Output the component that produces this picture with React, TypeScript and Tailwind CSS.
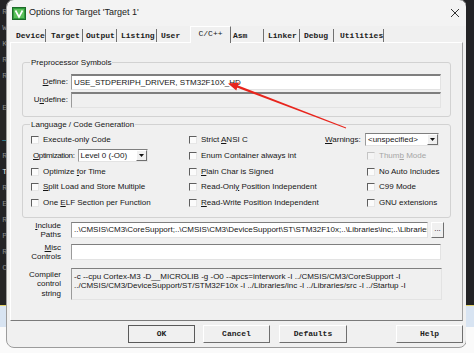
import React from 'react';

const sans = "font-['Liberation_Sans',Arial,sans-serif]";
const mono = "font-['Liberation_Mono',monospace]";

const sunken =
  'border-t border-l border-b border-r border-t-[#7f7f7f] border-l-[#9a9a9a] border-b-[#e3e3e3] border-r-[#e3e3e3]';
const raised =
  'border-t border-l border-b border-r border-t-white border-l-white border-b-[#6f6f6f] border-r-[#6f6f6f]';

const tabs = [
  { name: 'Device', cls: 'w-[36px] pl-[6px] border-r' },
  { name: 'Target', cls: 'w-[37px] pl-[5px] border-r' },
  { name: 'Output', cls: 'w-[34px] pl-[3px] border-r' },
  { name: 'Listing', cls: 'w-[40px] pl-[4px] border-r' },
  { name: 'User', cls: 'w-[33px] pl-[4px]' },
  { name: 'C/C++', cls: '', selected: true },
  { name: 'Asm', cls: 'w-[33px] pl-[2px] border-r' },
  { name: 'Linker', cls: 'w-[36px] pl-[4px] border-r' },
  { name: 'Debug', cls: 'w-[34px] pl-[4px] border-r' },
  { name: 'Utilities', cls: 'w-[50px] pl-[6px] border-r' },
];

const Check = ({ children, disabled }: { children: React.ReactNode; disabled?: boolean }) => (
  <div className={`flex items-center gap-[4px] whitespace-nowrap ${disabled ? 'text-[#a6a6a6]' : ''}`}>
    <span
      className={`w-[8px] h-[8px] shrink-0 border-t border-l border-b border-r ${
        disabled
          ? 'border-t-[#c4c4c4] border-l-[#c4c4c4] border-b-[#ececec] border-r-[#ececec] bg-[#f4f4f4]'
          : 'border-t-[#5f5f5f] border-l-[#5f5f5f] border-b-[#e6e6e6] border-r-[#e6e6e6] bg-[#fbfbfb]'
      }`}
    />
    <span>{children}</span>
  </div>
);

const Select = ({ value, className }: { value: string; className: string }) => (
  <div className={`flex items-stretch bg-white ${sunken} ${className}`}>
    <span className="flex-1 pl-[2px] flex items-center whitespace-nowrap overflow-hidden">{value}</span>
    <span className={`w-[11px] flex items-center justify-center bg-[#f0f0f0] ${raised}`}>
      <svg width="5" height="3" viewBox="0 0 5 3">
        <path d="M0 0h5L2.5 3z" fill="#111" />
      </svg>
    </span>
  </div>
);

const Group = ({ title, className, children }: { title: string; className: string; children: React.ReactNode }) => (
  <div className={`relative mx-[11px] border border-[#d2d2d2] rounded-[3px] ${className}`}>
    <span className="absolute -top-[6px] left-[7px] px-[1px] bg-[#f0f0f0] leading-[11px]">{title}</span>
    {children}
  </div>
);

const Btn = ({ label, def, className }: { label: string; def?: boolean; className: string }) => (
  <div
    className={`h-[18px] flex items-center justify-center bg-[#f0f0f0] ${mono} font-bold text-[8px] text-[#222] ${
      def ? 'border border-[#5a5a5a]' : raised
    } ${className}`}
  >
    {label}
  </div>
);

const Strip = ({ side }: { side: 'l' | 'r' }) => {
  const bits = side === 'l' ? ['R', 'W', 'K', 'R', 'R', '', 'E', '', '—', 'R', 'T', 'R', 'E', 'R', 'P', 'R', 'C', ''] : [];
  return (
    <div className={`flex flex-col h-full ${side === 'l' ? 'w-[7px]' : 'w-[8px]'}`}>
      <div className="h-[305px] bg-[#232325] flex flex-col overflow-hidden pt-[4px]">
        {bits.map((b, i) => (
          <div
            key={i}
            className={`h-[16px] flex items-center justify-end ${mono} text-[8px] leading-none ${
              b === '—' ? 'text-[#3fc6d6]' : b === 'T' ? 'text-[#e8e8e8]' : 'text-[#8a8a8a]'
            }`}
          >
            {b}
          </div>
        ))}
      </div>
      <div className="h-px bg-[#e4d36a]" />
      <div className="h-[21px] bg-[#d8e4f2]" />
      <div className="flex-1 bg-[#fafafa]" />
    </div>
  );
};

export default function App() {
  return (
    <div className={`relative w-[474px] h-[353px] overflow-hidden flex ${sans} text-[8px] text-[#151515]`}>
      <Strip side="l" />
      <div className="w-[459px] h-full flex flex-col bg-[linear-gradient(#232325_0_305px,#e4d36a_305px_306px,#d8e4f2_306px_327px,#fafafa_327px)]">
        <div className="h-[347px] bg-[#f0f0f0] rounded-[7px] overflow-hidden flex flex-col outline-1 outline-[#9c9c9c]">
          {/* title bar */}
          <div className="h-[26px] shrink-0 flex items-center pl-[5px] pr-[6px] bg-[#f3f3f3]">
            <svg width="14" height="13" viewBox="0 0 14 13">
              <rect x="0.5" y="0.5" width="13" height="12" fill="#2f9a3c" stroke="#1d6b27" />
              <rect x="2" y="2" width="10" height="9" fill="#5cc05a" />
              <path d="M3.5 3.5 L7 10 L10.5 3.5" fill="none" stroke="#fff" strokeWidth="1.6" />
            </svg>
            <span className="ml-[3px] text-[9px] text-[#1b1b1b]">Options for Target 'Target 1'</span>
            <svg className="ml-auto" width="10" height="10" viewBox="0 0 10 10">
              <path d="M1 1L9 9M9 1L1 9" stroke="#333" strokeWidth="1" />
            </svg>
          </div>

          {/* tab strip */}
          <div className={`h-[16px] shrink-0 ml-[3px] flex items-end ${mono} font-bold text-[8px] text-[#202020]`}>
            {tabs.map((t) =>
              t.selected ? (
                <div
                  key={t.name}
                  className="relative z-10 -mb-px w-[41px] h-[17px] pt-[1px] leading-[11px] text-center bg-[#f0f0f0] border-t border-l border-r border-t-white border-l-white border-r-[#6f6f6f] font-normal"
                >
                  {t.name}
                </div>
              ) : (
                <div key={t.name} className={`h-[13px] leading-[13px] border-[#707070] ${t.cls}`}>
                  {t.name}
                </div>
              )
            )}
          </div>

          {/* tab page */}
          <div className="h-[279px] shrink-0 mx-[3px] flex flex-col border-t border-l border-r border-b border-t-white border-l-white border-r-[#a0a0a0] border-b-[#7a7a7a]">
            <Group title="Preprocessor Symbols" className="mt-[19px] h-[55px] pt-[11px]">
              <div className="flex items-center">
                <span className="w-[45px] text-right">
                  <span className="underline underline-offset-1">D</span>efine:
                </span>
                <div className={`ml-[3px] w-[370px] h-[16px] bg-white border-t-2 ${sunken} pl-[2px] flex items-center whitespace-nowrap`}>
                  USE_STDPERIPH_DRIVER, STM32F10X_HD
                </div>
              </div>
              <div className="flex items-center mt-[2px]">
                <span className="w-[45px] text-right">
                  U<span className="underline underline-offset-1">n</span>define:
                </span>
                <div className={`ml-[3px] w-[370px] h-[16px] bg-[#f0f0f0] border-t-2 ${sunken}`} />
              </div>
            </Group>

            <Group title="Language / Code Generation" className="mt-[7px] h-[94px] pt-[7px] pl-[8px]">
              <div className="grid grid-cols-[158px_136px_1fr] grid-rows-[15px_17px_15px_16px_15px] items-center">
                <Check>Execute-only Code</Check>
                <Check>
                  Strict <span className="underline underline-offset-1">A</span>NSI C
                </Check>
                <div className="flex items-center">
                  <span className="w-[40px]">
                    <span className="underline underline-offset-1">W</span>arnings:
                  </span>
                  <Select value="<unspecified>" className="w-[74px] h-[13px]" />
                </div>

                <div className="flex items-center pl-[2px]">
                  <span className="tracking-[-0.4px] whitespace-nowrap">
                    <span className="underline underline-offset-1">O</span>ptimization:
                  </span>
                  <Select value="Level 0 (-O0)" className="ml-[3px] w-[70px] h-[13px]" />
                </div>
                <Check>Enum Container always int</Check>
                <div className="pl-[42px]">
                  <Check disabled>
                    Thum<span className="underline underline-offset-1">b</span> Mode
                  </Check>
                </div>

                <Check>
                  Optimize <span className="underline underline-offset-1">f</span>or Time
                </Check>
                <Check>
                  <span className="underline underline-offset-1">P</span>lain Char is Signed
                </Check>
                <div className="pl-[42px]">
                  <Check>No Auto Includes</Check>
                </div>

                <Check>
                  <span className="underline underline-offset-1">S</span>plit Load and Store Multiple
                </Check>
                <Check>
                  Read-Onl<span className="underline underline-offset-1">y</span> Position Independent
                </Check>
                <div className="pl-[42px]">
                  <Check>C99 Mode</Check>
                </div>

                <Check>
                  One <span className="underline underline-offset-1">E</span>LF Section per Function
                </Check>
                <Check>
                  <span className="underline underline-offset-1">R</span>ead-Write Position Independent
                </Check>
                <div className="pl-[42px]">
                  <Check>GNU extensions</Check>
                </div>
              </div>
            </Group>

            <div className="mt-[4px] h-[16px] flex items-center">
              <div className="w-[50px] text-right leading-[9px]">
                <span className="underline underline-offset-1">I</span>nclude
                <br />
                Paths
              </div>
              <div className={`ml-[10px] w-[357px] h-[16px] bg-white ${sunken} pl-[2px] flex items-center whitespace-nowrap overflow-hidden`}>
                ..\CMSIS\CM3\CoreSupport;..\CMSIS\CM3\DeviceSupport\ST\STM32F10x;..\Libraries\inc;..\Libraries\src;..\Startup
              </div>
              <div className={`ml-[3px] w-[13px] h-[16px] bg-[#f0f0f0] ${raised} flex items-center justify-center leading-none pb-[2px]`}>
                ...
              </div>
            </div>

            <div className="mt-[6px] h-[16px] flex items-center">
              <div className="w-[50px] text-right leading-[9px]">
                <span className="underline underline-offset-1">M</span>isc
                <br />
                Controls
              </div>
              <div className={`ml-[10px] w-[370px] h-[16px] bg-white ${sunken}`} />
            </div>

            <div className="mt-[8px] h-[32px] flex items-center">
              <div className="w-[50px] text-right leading-[9.5px]">
                Compiler
                <br />
                control
                <br />
                string
              </div>
              <div className={`ml-[10px] w-[371px] h-[32px] bg-[#f0f0f0] ${sunken} pl-[2px] pt-[3px] leading-[9px] whitespace-nowrap overflow-hidden`}>
                -c --cpu Cortex-M3 -D__MICROLIB -g -O0 --apcs=interwork -I ../CMSIS/CM3/CoreSupport -I
                <br />
                ../CMSIS/CM3/DeviceSupport/ST/STM32F10x -I ../Libraries/inc -I ../Libraries/src -I ../Startup -I
              </div>
            </div>
          </div>

          {/* buttons */}
          <div className="mt-[4px] flex pl-[121px]">
            <Btn label="OK" def className="w-[67px]" />
            <Btn label="Cancel" className="ml-[8px] w-[67px]" />
            <Btn label="Defaults" className="ml-[9px] w-[68px]" />
            <Btn label="Help" className="ml-[49px] w-[67px]" />
          </div>
        </div>
      </div>
      <Strip side="r" />

      {/* red annotation arrow */}
      <svg className="absolute inset-0 pointer-events-none" width="474" height="353" viewBox="0 0 474 353">
        <polygon points="236.9,85.1 346.1,127.6 345.9,128.4 236.1,87.3" fill="#e8251d" />
        <polygon points="228,83.5 239,82.6 236.3,90.4" fill="#e8251d" />
      </svg>
    </div>
  );
}
